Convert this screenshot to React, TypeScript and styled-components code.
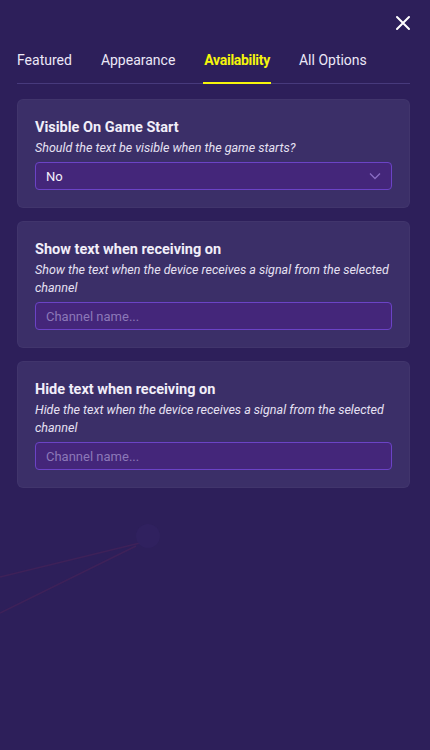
import React, { useState } from 'react'
import styled, { createGlobalStyle } from 'styled-components'

const GlobalStyle = createGlobalStyle`
  html, body {
    margin: 0;
    padding: 0;
    background: #2d1f5a;
  }
  body {
    font-family: Roboto, "Liberation Sans", Arial, sans-serif;
    -webkit-font-smoothing: antialiased;
  }
`

const Screen = styled.div`
  position: relative;
  width: 430px;
  height: 750px;
  overflow: hidden;
  background: #2d1f5a;
  color: #fff;
  box-sizing: border-box;
  padding: 0 20px 0 17px;
`

const BackdropArt = styled.svg`
  position: absolute;
  left: 0;
  top: 0;
  pointer-events: none;
`

const Content = styled.div`
  position: relative;
  display: flex;
  flex-direction: column;
`

const TopBar = styled.div`
  display: flex;
  justify-content: flex-end;
  height: 47px;
  padding-top: 13px;
  box-sizing: border-box;
`

const CloseButton = styled.button`
  width: 20px;
  height: 20px;
  margin-right: -3px;
  padding: 0;
  border: none;
  background: none;
  cursor: pointer;
  display: flex;
  align-items: center;
  justify-content: center;
`

const Tabs = styled.div`
  display: flex;
  align-items: flex-end;
  border-bottom: 1px solid #473a7c;
`

const Tab = styled.button<{ $active?: boolean }>`
  position: relative;
  background: none;
  border: none;
  white-space: nowrap;
  padding: 4px 0 14px;
  margin-right: 29px;
  font-family: inherit;
  font-size: 14px;
  line-height: 18px;
  font-weight: ${(p) => (p.$active ? 700 : 400)};
  letter-spacing: ${(p) => (p.$active ? '-0.3px' : '0')};
  color: ${(p) => (p.$active ? '#f5f50c' : '#ece8f7')};
  cursor: pointer;

  &::after {
    content: '';
    display: ${(p) => (p.$active ? 'block' : 'none')};
    position: absolute;
    left: -1px;
    right: -1px;
    bottom: -1px;
    height: 2px;
    background: #f5f50c;
  }
`

const Cards = styled.div`
  display: flex;
  flex-direction: column;
  gap: 13px;
  margin-top: 15px;
`

const Card = styled.div`
  background: #3b2f68;
  border-radius: 6px;
  padding: 20px 18px 18px;
  box-shadow: inset 0 0 0 1px rgba(255, 255, 255, 0.03);
`

const Title = styled.div`
  font-size: 14.5px;
  font-weight: 700;
  color: #f1eef9;
  line-height: 18px;
`

const Description = styled.div`
  font-size: 12.5px;
  font-style: italic;
  color: #e6e1f3;
  line-height: 18px;
  margin-top: 2px;
  margin-bottom: 5px;
`

const Field = styled.div`
  position: relative;
  height: 28px;
  box-sizing: border-box;
  background: #44267a;
  border: 1px solid #6b43c6;
  border-radius: 4px;
  display: flex;
  align-items: center;
  padding: 0 10px;
`

const SelectValue = styled.span`
  flex: 1;
  font-size: 13px;
  color: #f4f1fb;
`

const TextInput = styled.input`
  flex: 1;
  background: transparent;
  border: none;
  outline: none;
  padding: 0;
  font-family: inherit;
  font-size: 13px;
  color: #f4f1fb;

  &::placeholder {
    color: #8c78b8;
  }
`

type Option = {
  title: string
  description: string
}

const channelOptions: Option[] = [
  {
    title: 'Show text when receiving on',
    description:
      'Show the text when the device receives a signal from the selected channel',
  },
  {
    title: 'Hide text when receiving on',
    description:
      'Hide the text when the device receives a signal from the selected channel',
  },
]

const tabNames = ['Featured', 'Appearance', 'Availability', 'All Options']

export default function App() {
  const [activeTab, setActiveTab] = useState('Availability')

  return (
    <>
      <GlobalStyle />
      <Screen>
        <BackdropArt width="430" height="750" viewBox="0 0 430 750">
          <path
            d="M0 577 L140 543 M0 613 L136 546"
            stroke="#4a2358"
            strokeWidth="1.5"
            fill="none"
            opacity="0.6"
          />
          <circle cx="148" cy="536" r="12" fill="#312260" opacity="0.8" />
        </BackdropArt>
        <Content>
          <TopBar>
            <CloseButton aria-label="Close">
              <svg width="16" height="16" viewBox="0 0 16 16">
                <path
                  d="M2 2 L14 14 M14 2 L2 14"
                  stroke="#ffffff"
                  strokeWidth="2"
                  strokeLinecap="round"
                />
              </svg>
            </CloseButton>
          </TopBar>
          <Tabs>
            {tabNames.map((name) => (
              <Tab
                key={name}
                $active={name === activeTab}
                onClick={() => setActiveTab(name)}
              >
                {name}
              </Tab>
            ))}
          </Tabs>
          <Cards>
            <Card>
              <Title>Visible On Game Start</Title>
              <Description>Should the text be visible when the game starts?</Description>
              <Field>
                <SelectValue>No</SelectValue>
                <svg width="12" height="8" viewBox="0 0 12 8">
                  <path
                    d="M1 1.5 L6 6.5 L11 1.5"
                    stroke="#8a6cc4"
                    strokeWidth="1.3"
                    fill="none"
                  />
                </svg>
              </Field>
            </Card>
            {channelOptions.map((opt) => (
              <Card key={opt.title}>
                <Title>{opt.title}</Title>
                <Description>{opt.description}</Description>
                <Field>
                  <TextInput placeholder="Channel name..." />
                </Field>
              </Card>
            ))}
          </Cards>
        </Content>
      </Screen>
    </>
  )
}
